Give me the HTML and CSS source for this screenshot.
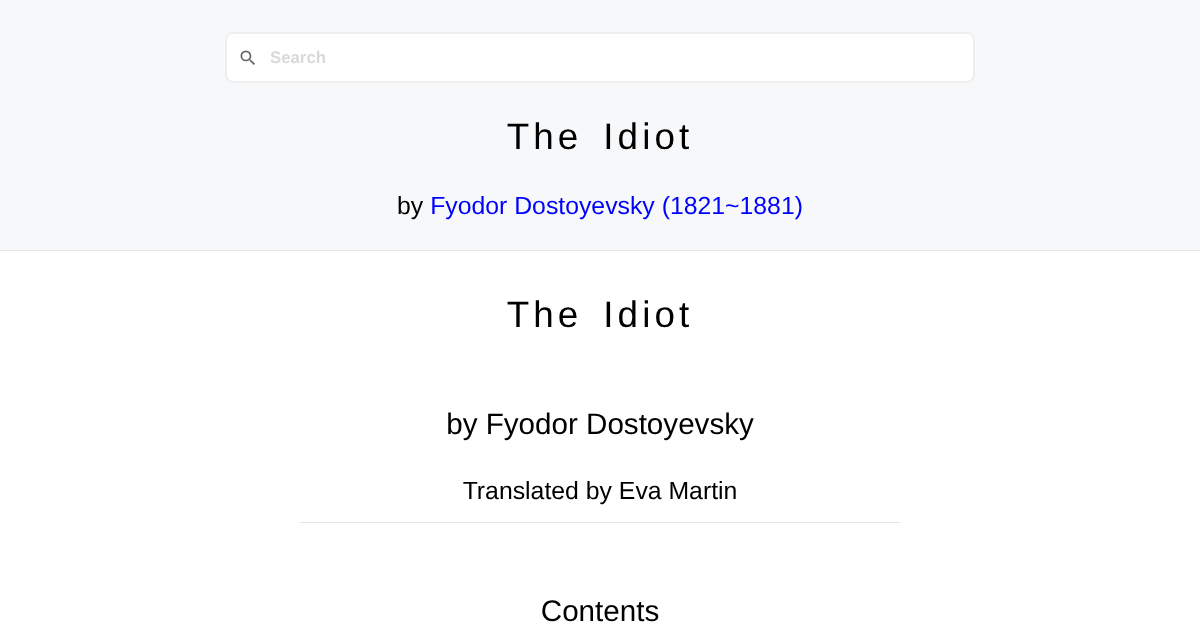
FILE: index.html
```html
<!DOCTYPE html>
<html lang="en">
<head>
  <meta charset="UTF-8" />
  <title>The Idiot</title>
  <link rel="stylesheet" href="styles.css">
</head>
<body>
  <div class="page">
    <header class="top">
      <div class="search">
        <svg class="search-icon" viewBox="0 0 24 24" width="20" height="20"><path d="M15.5 14h-.79l-.28-.27A6.47 6.47 0 0 0 16 9.5 6.5 6.5 0 1 0 9.5 16c1.61 0 3.09-.59 4.23-1.57l.27.28v.79l5 4.99L20.49 19l-4.99-5zm-6 0C7.01 14 5 11.99 5 9.5S7.01 5 9.5 5 14 7.01 14 9.5 11.99 14 9.5 14z"/></svg>
        <input type="text" class="search-input" placeholder="Search" />
      </div>
      <div class="book-title">The Idiot</div>
      <div class="byline">by <a href="#">Fyodor Dostoyevsky (1821~1881)</a></div>
    </header>
    <main class="content">
      <h1 class="book-title">The Idiot</h1>
      <h2 class="author">by Fyodor Dostoyevsky</h2>
      <div class="translator">Translated by Eva Martin</div>
      <hr class="rule" />
      <h2 class="contents">Contents</h2>
    </main>
  </div>
</body>
</html>
```

FILE: styles.css
```css
html, body {
  margin: 0;
  height: 628px;
  overflow: hidden;
}

body {
  font-family: "Liberation Sans", Arial, sans-serif;
  color: #000;
  background: #fff;
  text-rendering: geometricPrecision;
}

.page {
  will-change: transform;
}

.top {
  height: 251px;
  box-sizing: border-box;
  background: #f7f8fa;
  border-bottom: 1px solid #e1e4e8;
  padding-top: 32px;
  text-align: center;
}

.search {
  display: flex;
  align-items: center;
  width: 750px;
  height: 51px;
  box-sizing: border-box;
  margin: 0 auto;
  padding-left: 11px;
  background: white;
  border: 2px solid #eeeeee;
  border-radius: 8px;
}

.search-icon {
  fill: #666;
  flex: none;
}

.search-input {
  flex: 1;
  margin-left: 12px;
  border: none;
  outline: none;
  padding: 0;
  font-family: inherit;
  font-size: 16.8px;
  font-weight: bold;
  text-rendering: geometricPrecision;
}

.search-input::placeholder {
  color: #d9d9d9;
  opacity: 1;
}

.book-title {
  margin: 0;
  font-size: 36.8px;
  font-weight: normal;
  line-height: 42px;
  letter-spacing: 4.1px;
  word-spacing: 6.6px;
  text-align: center;
}

.top .book-title {
  margin-top: 33px;
}

.byline {
  margin-top: 34px;
  font-size: 24.8px;
  line-height: 30px;
}

.byline a {
  color: #00f;
  text-decoration: none;
}

.content {
  text-align: center;
}

.content .book-title {
  margin-top: 43px;
}

.author {
  margin: 70px 0 0;
  font-size: 29.6px;
  font-weight: normal;
  line-height: 38px;
}

.translator {
  margin-top: 33px;
  font-size: 24.8px;
  line-height: 30px;
}

.rule {
  width: 600px;
  margin: 15px auto 0;
  border: none;
  border-top: 1px solid #e1e4e8;
}

.contents {
  margin: 71px 0 0;
  font-size: 29.6px;
  font-weight: normal;
  line-height: 36px;
}
```
